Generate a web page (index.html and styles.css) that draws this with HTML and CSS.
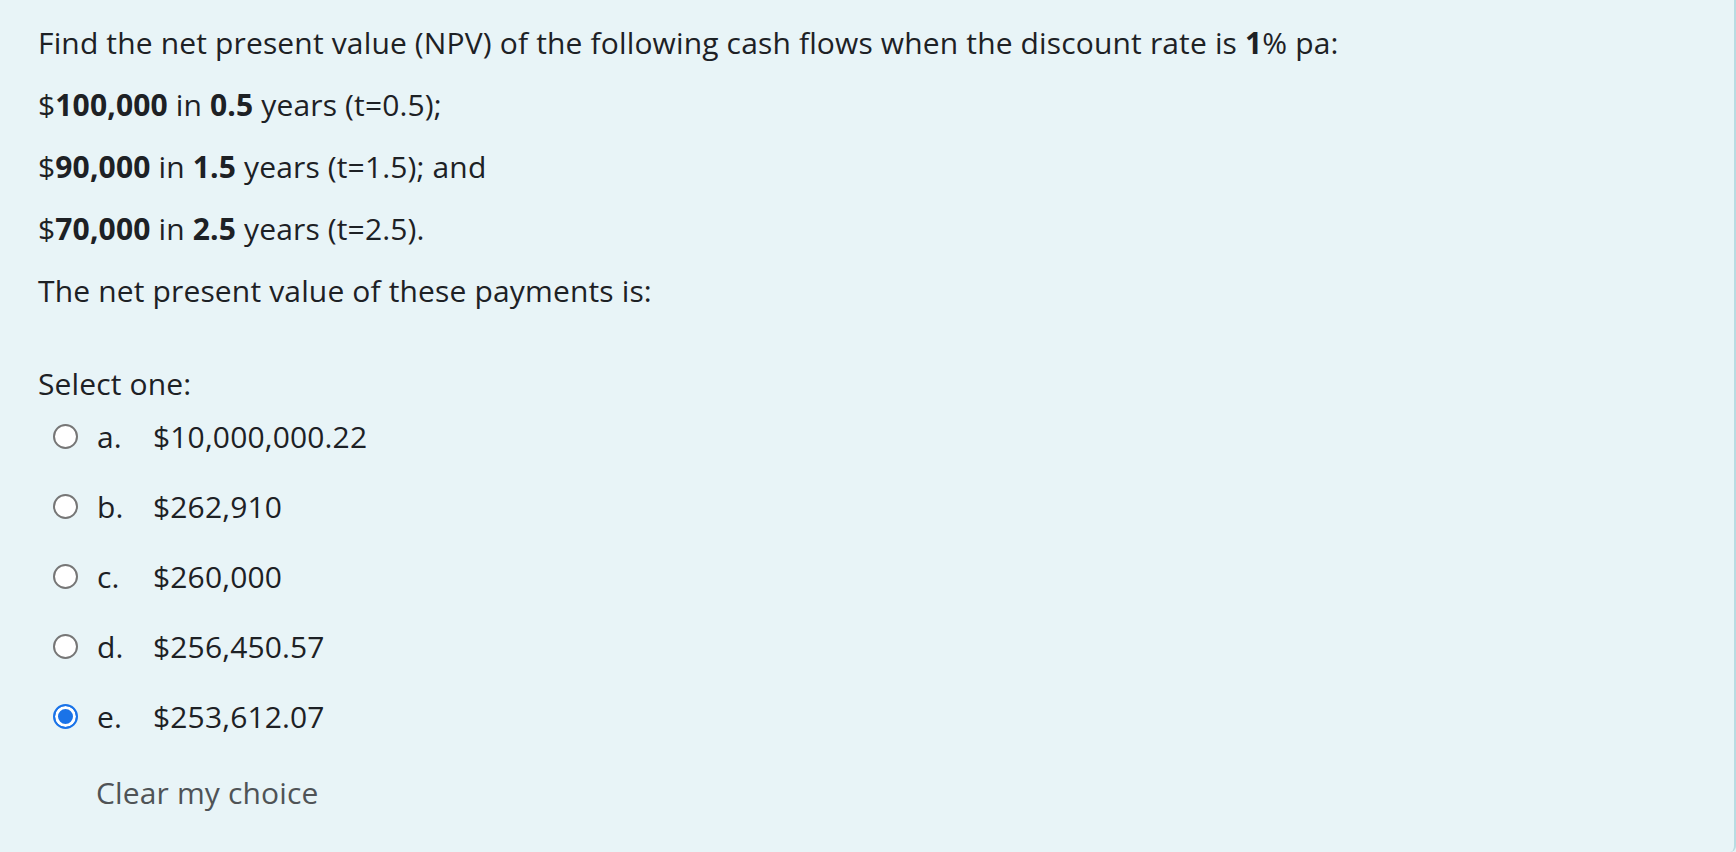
FILE: index.html
```html
<!DOCTYPE html>
<html lang="en">
<head>
<meta charset="utf-8">
<title>Question</title>
<link rel="stylesheet" href="styles.css">
</head>
<body>
<div class="formulation">
  <div class="qtext">
    <p>Find the net present value (NPV) of the following cash flows when the discount rate is <b>1</b>% pa:</p>
    <p>$<b>100,000</b> in <b>0.5</b> years (t=0.5);</p>
    <p>$<b>90,000</b> in <b>1.5</b> years (t=1.5); and</p>
    <p>$<b>70,000</b> in <b>2.5</b> years (t=2.5).</p>
    <p>The net present value of these payments is:</p>
  </div>
  <div class="ablock">
    <div class="prompt">Select one:</div>
    <div class="answers">
      <label class="opt"><input type="radio" name="q" class="radio"><span class="num">a.</span><span>$10,000,000.22</span></label>
      <label class="opt"><input type="radio" name="q" class="radio"><span class="num">b.</span><span>$262,910</span></label>
      <label class="opt"><input type="radio" name="q" class="radio"><span class="num">c.</span><span>$260,000</span></label>
      <label class="opt"><input type="radio" name="q" class="radio"><span class="num">d.</span><span>$256,450.57</span></label>
      <label class="opt"><input type="radio" name="q" class="radio" checked><span class="num">e.</span><span>$253,612.07</span></label>
    </div>
    <div class="clear">Clear my choice</div>
  </div>
</div>
</body>
</html>
```
FILE: styles.css
```css
html, body {
  margin: 0;
  padding: 0;
  background: #e7f3f5;
}
body {
  font-family: "Open Sans", "Noto Sans", sans-serif;
  font-size: 30px;
  letter-spacing: 0.15px;
  line-height: 45px;
  color: #1d2125;
}
.formulation {
  box-sizing: border-box;
  width: 1736px;
  height: 852px;
  background: #e8f4f7;
  border-right: 2px solid #b8dce2;
  border-bottom-right-radius: 6px;
  padding: 20px 0 0 38px;
}
.qtext p {
  margin: 0 0 17px;
}
.qtext b {
  font-weight: 700;
}
.ablock {
  padding-top: 31px;
}
.prompt {
  margin-bottom: 8px;
}
.answers {
  display: flex;
  flex-direction: column;
  gap: 25px;
  padding-left: 15px;
}
.opt {
  display: flex;
  align-items: center;
  height: 45px;
}
.radio {
  appearance: none;
  -webkit-appearance: none;
  box-sizing: border-box;
  width: 25px;
  height: 25px;
  margin: 0 19px 0 0;
  border: 2px solid #767676;
  border-radius: 50%;
  background: #fff;
}
.radio:checked {
  border-color: #1a73e8;
  background: #1a73e8;
  box-shadow: inset 0 0 0 3px #fff;
}
.num {
  display: inline-block;
  width: 56px;
}
.clear {
  margin-top: 31px;
  padding-left: 58px;
  color: #4f5356;
}
```
